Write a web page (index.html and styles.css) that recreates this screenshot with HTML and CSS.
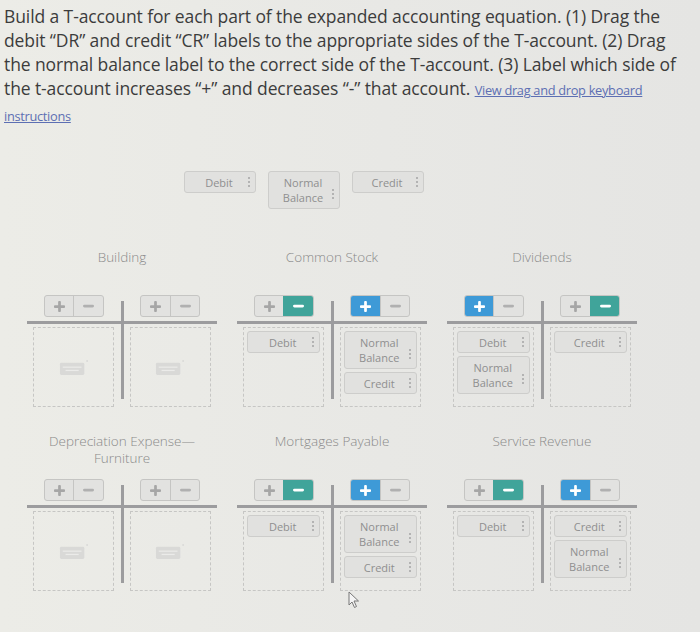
FILE: index.html
```html
<!DOCTYPE html>
<html>
<head>
<meta charset="utf-8">
<link rel="stylesheet" href="styles.css">
</head>
<body>
<div class="page">
  <p class="prompt">Build a T-account for each part of the expanded accounting equation. (1) Drag the<br>debit “DR” and credit “CR” labels to the appropriate sides of the T-account. (2) Drag<br>the normal balance label to the correct side of the T-account. (3) Label which side of<br>the t-account increases “+” and decreases “-” that account. <a class="kb" href="#">View drag and drop keyboard<br>instructions</a></p>

  <div class="bank">
    <div class="chip"><span class="chip-text">Debit</span><span class="grip"></span></div>
    <div class="chip tall"><span class="chip-text">Normal<br>Balance</span><span class="grip"></span></div>
    <div class="chip"><span class="chip-text">Credit</span><span class="grip"></span></div>
  </div>

  <div class="accounts">
    <!-- Building -->
    <div class="acct">
      <div class="acct-title">Building</div>
      <div class="tbody">
        <div class="pm left"><span class="plus"><svg viewBox="0 0 12 12"><rect x="4.5" y="0" width="3" height="12" rx="1"/><rect x="0" y="4.5" width="12" height="3" rx="1"/></svg></span><span class="minus"><svg viewBox="0 0 12 4"><rect x="0" y="0.5" width="12" height="3" rx="1.5"/></svg></span></div>
        <div class="pm right"><span class="plus"><svg viewBox="0 0 12 12"><rect x="4.5" y="0" width="3" height="12" rx="1"/><rect x="0" y="4.5" width="12" height="3" rx="1"/></svg></span><span class="minus"><svg viewBox="0 0 12 4"><rect x="0" y="0.5" width="12" height="3" rx="1.5"/></svg></span></div>
        <div class="hline"></div>
        <div class="vline"></div>
        <div class="drop left empty"><svg class="ph" viewBox="0 0 32 18"><rect x="1" y="4" width="26" height="13" rx="1.5"/><rect class="ln" x="4" y="8" width="20" height="1.3"/><rect class="ln" x="7" y="11.5" width="14" height="1.3"/><circle cx="30" cy="2" r="1"/></svg></div>
        <div class="drop right empty"><svg class="ph" viewBox="0 0 32 18"><rect x="1" y="4" width="26" height="13" rx="1.5"/><rect class="ln" x="4" y="8" width="20" height="1.3"/><rect class="ln" x="7" y="11.5" width="14" height="1.3"/><circle cx="30" cy="2" r="1"/></svg></div>
      </div>
    </div>

    <!-- Common Stock -->
    <div class="acct">
      <div class="acct-title">Common Stock</div>
      <div class="tbody">
        <div class="pm left"><span class="plus"><svg viewBox="0 0 12 12"><rect x="4.5" y="0" width="3" height="12" rx="1"/><rect x="0" y="4.5" width="12" height="3" rx="1"/></svg></span><span class="minus teal"><svg viewBox="0 0 12 4"><rect x="0" y="0.5" width="12" height="3" rx="1.5"/></svg></span></div>
        <div class="pm right"><span class="plus blue"><svg viewBox="0 0 12 12"><rect x="4.5" y="0" width="3" height="12" rx="1"/><rect x="0" y="4.5" width="12" height="3" rx="1"/></svg></span><span class="minus"><svg viewBox="0 0 12 4"><rect x="0" y="0.5" width="12" height="3" rx="1.5"/></svg></span></div>
        <div class="hline"></div>
        <div class="vline"></div>
        <div class="drop left">
          <div class="chip"><span class="chip-text">Debit</span><span class="grip"></span></div>
        </div>
        <div class="drop right">
          <div class="chip tall"><span class="chip-text">Normal<br>Balance</span><span class="grip"></span></div>
          <div class="chip"><span class="chip-text">Credit</span><span class="grip"></span></div>
        </div>
      </div>
    </div>

    <!-- Dividends -->
    <div class="acct">
      <div class="acct-title">Dividends</div>
      <div class="tbody">
        <div class="pm left"><span class="plus blue"><svg viewBox="0 0 12 12"><rect x="4.5" y="0" width="3" height="12" rx="1"/><rect x="0" y="4.5" width="12" height="3" rx="1"/></svg></span><span class="minus"><svg viewBox="0 0 12 4"><rect x="0" y="0.5" width="12" height="3" rx="1.5"/></svg></span></div>
        <div class="pm right"><span class="plus"><svg viewBox="0 0 12 12"><rect x="4.5" y="0" width="3" height="12" rx="1"/><rect x="0" y="4.5" width="12" height="3" rx="1"/></svg></span><span class="minus teal"><svg viewBox="0 0 12 4"><rect x="0" y="0.5" width="12" height="3" rx="1.5"/></svg></span></div>
        <div class="hline"></div>
        <div class="vline"></div>
        <div class="drop left">
          <div class="chip"><span class="chip-text">Debit</span><span class="grip"></span></div>
          <div class="chip tall"><span class="chip-text">Normal<br>Balance</span><span class="grip"></span></div>
        </div>
        <div class="drop right">
          <div class="chip"><span class="chip-text">Credit</span><span class="grip"></span></div>
        </div>
      </div>
    </div>

    <!-- Depreciation Expense -->
    <div class="acct">
      <div class="acct-title">Depreciation Expense—<br>Furniture</div>
      <div class="tbody">
        <div class="pm left"><span class="plus"><svg viewBox="0 0 12 12"><rect x="4.5" y="0" width="3" height="12" rx="1"/><rect x="0" y="4.5" width="12" height="3" rx="1"/></svg></span><span class="minus"><svg viewBox="0 0 12 4"><rect x="0" y="0.5" width="12" height="3" rx="1.5"/></svg></span></div>
        <div class="pm right"><span class="plus"><svg viewBox="0 0 12 12"><rect x="4.5" y="0" width="3" height="12" rx="1"/><rect x="0" y="4.5" width="12" height="3" rx="1"/></svg></span><span class="minus"><svg viewBox="0 0 12 4"><rect x="0" y="0.5" width="12" height="3" rx="1.5"/></svg></span></div>
        <div class="hline"></div>
        <div class="vline"></div>
        <div class="drop left empty"><svg class="ph" viewBox="0 0 32 18"><rect x="1" y="4" width="26" height="13" rx="1.5"/><rect class="ln" x="4" y="8" width="20" height="1.3"/><rect class="ln" x="7" y="11.5" width="14" height="1.3"/><circle cx="30" cy="2" r="1"/></svg></div>
        <div class="drop right empty"><svg class="ph" viewBox="0 0 32 18"><rect x="1" y="4" width="26" height="13" rx="1.5"/><rect class="ln" x="4" y="8" width="20" height="1.3"/><rect class="ln" x="7" y="11.5" width="14" height="1.3"/><circle cx="30" cy="2" r="1"/></svg></div>
      </div>
    </div>

    <!-- Mortgages Payable -->
    <div class="acct">
      <div class="acct-title">Mortgages Payable</div>
      <div class="tbody">
        <div class="pm left"><span class="plus"><svg viewBox="0 0 12 12"><rect x="4.5" y="0" width="3" height="12" rx="1"/><rect x="0" y="4.5" width="12" height="3" rx="1"/></svg></span><span class="minus teal"><svg viewBox="0 0 12 4"><rect x="0" y="0.5" width="12" height="3" rx="1.5"/></svg></span></div>
        <div class="pm right"><span class="plus blue"><svg viewBox="0 0 12 12"><rect x="4.5" y="0" width="3" height="12" rx="1"/><rect x="0" y="4.5" width="12" height="3" rx="1"/></svg></span><span class="minus"><svg viewBox="0 0 12 4"><rect x="0" y="0.5" width="12" height="3" rx="1.5"/></svg></span></div>
        <div class="hline"></div>
        <div class="vline"></div>
        <div class="drop left">
          <div class="chip"><span class="chip-text">Debit</span><span class="grip"></span></div>
        </div>
        <div class="drop right">
          <div class="chip tall"><span class="chip-text">Normal<br>Balance</span><span class="grip"></span></div>
          <div class="chip"><span class="chip-text">Credit</span><span class="grip"></span></div>
        </div>
      </div>
    </div>

    <!-- Service Revenue -->
    <div class="acct">
      <div class="acct-title">Service Revenue</div>
      <div class="tbody">
        <div class="pm left"><span class="plus"><svg viewBox="0 0 12 12"><rect x="4.5" y="0" width="3" height="12" rx="1"/><rect x="0" y="4.5" width="12" height="3" rx="1"/></svg></span><span class="minus teal"><svg viewBox="0 0 12 4"><rect x="0" y="0.5" width="12" height="3" rx="1.5"/></svg></span></div>
        <div class="pm right"><span class="plus blue"><svg viewBox="0 0 12 12"><rect x="4.5" y="0" width="3" height="12" rx="1"/><rect x="0" y="4.5" width="12" height="3" rx="1"/></svg></span><span class="minus"><svg viewBox="0 0 12 4"><rect x="0" y="0.5" width="12" height="3" rx="1.5"/></svg></span></div>
        <div class="hline"></div>
        <div class="vline"></div>
        <div class="drop left">
          <div class="chip"><span class="chip-text">Debit</span><span class="grip"></span></div>
        </div>
        <div class="drop right">
          <div class="chip"><span class="chip-text">Credit</span><span class="grip"></span></div>
          <div class="chip tall"><span class="chip-text">Normal<br>Balance</span><span class="grip"></span></div>
        </div>
      </div>
    </div>
  </div>

  <svg class="cursor" viewBox="0 0 12 18"><path d="M1 1 L1 14 L4 11 L6.5 16.5 L8.5 15.5 L6 10 L10.5 10 Z" fill="#f4f4f4" stroke="#777" stroke-width="1" stroke-linejoin="round"/></svg>
</div>
</body>
</html>
```

FILE: styles.css
```css
html, body {
  margin: 0;
  padding: 0;
  background: #e8e8e4;
}

.page {
  position: relative;
  width: 700px;
  height: 632px;
  overflow: hidden;
  font-family: "Open Sans", "Noto Sans", sans-serif;
  background: linear-gradient(90deg, #ecece7 0%, #e8e8e5 55%, #e5e5e3 100%);
}

.prompt {
  margin: 0;
  padding: 4px 0 0 4px;
  font-size: 17.5px;
  line-height: 24px;
  color: #3c3c3c;
  white-space: nowrap;
  letter-spacing: -0.1px;
}

.kb {
  font-size: 12.8px;
  color: #5d6fb3;
  text-decoration: underline;
  letter-spacing: -0.3px;
}

.bank {
  display: flex;
  align-items: flex-start;
  gap: 12px;
  margin-top: 43px;
  padding-left: 184px;
}

.bank .chip {
  width: 72px;
}

.chip {
  display: flex;
  align-items: center;
  height: 22px;
  box-sizing: border-box;
  border: 1px solid #cdcdcb;
  border-radius: 3px;
  background: #e1e1df;
  color: #8f8f8f;
  font-size: 11px;
  line-height: 15px;
  padding-left: 8px;
}

.chip.tall {
  height: 38px;
}

.chip-text {
  flex: 1;
  text-align: center;
}

.grip {
  width: 0;
  height: 10px;
  border-left: 2px dotted #b3b3b3;
  margin: 0 5px 0 3px;
}

.chip.tall .grip {
  margin-top: 8px;
}

.accounts {
  display: grid;
  grid-template-columns: repeat(3, 190px);
  column-gap: 20px;
  row-gap: 26px;
  padding-left: 27px;
  margin-top: 40px;
}

.acct-title {
  height: 46px;
  text-align: center;
  font-size: 13.5px;
  line-height: 17px;
  color: #8a8a8a;
  font-weight: 300;
}

.tbody {
  display: grid;
  grid-template-columns: 1fr 3px 1fr;
  grid-template-rows: 22px 4px 3px 3px 80px;
}

.pm {
  grid-row: 1;
  justify-self: center;
  display: flex;
  width: 60px;
  height: 22px;
  box-sizing: border-box;
  border: 1px solid #c5c5c3;
  border-radius: 3px;
  overflow: hidden;
  background: #e2e2e0;
}

.pm.left { grid-column: 1; }
.pm.right { grid-column: 3; }

.pm span {
  flex: 1;
  display: flex;
  align-items: center;
  justify-content: center;
}

.pm .minus {
  border-left: 1px solid #c5c5c3;
}

.pm .plus svg {
  width: 11px;
  height: 11px;
  fill: #a6a6a6;
}

.pm .minus svg {
  width: 11px;
  height: 4px;
  fill: #b0b0b0;
}

.pm .blue {
  background: #3e9ad7;
}

.pm .teal {
  background: #40a49a;
  border-left-color: #40a49a;
}

.pm .blue svg,
.pm .teal svg {
  fill: #ffffff;
}

.hline {
  grid-row: 3;
  grid-column: 1 / 4;
  background: #9c9c9e;
}

.vline {
  grid-row: 1 / 6;
  grid-column: 2;
  margin-top: 6px;
  margin-bottom: 8px;
  background: #9c9c9e;
  z-index: 1;
}

.drop {
  grid-row: 5;
  justify-self: center;
  width: 81px;
  box-sizing: border-box;
  border: 1px dashed #c6c6c4;
  padding: 3px;
  display: flex;
  flex-direction: column;
  gap: 3px;
}

.drop.left { grid-column: 1; }
.drop.right { grid-column: 3; }

.drop.empty {
  align-items: center;
  justify-content: center;
}

.ph {
  width: 30px;
  height: 17px;
  fill: #d9d9d7;
}

.ph .ln {
  fill: #ebebe9;
}

.cursor {
  position: absolute;
  left: 348px;
  top: 591px;
  width: 12px;
  height: 18px;
}
```
